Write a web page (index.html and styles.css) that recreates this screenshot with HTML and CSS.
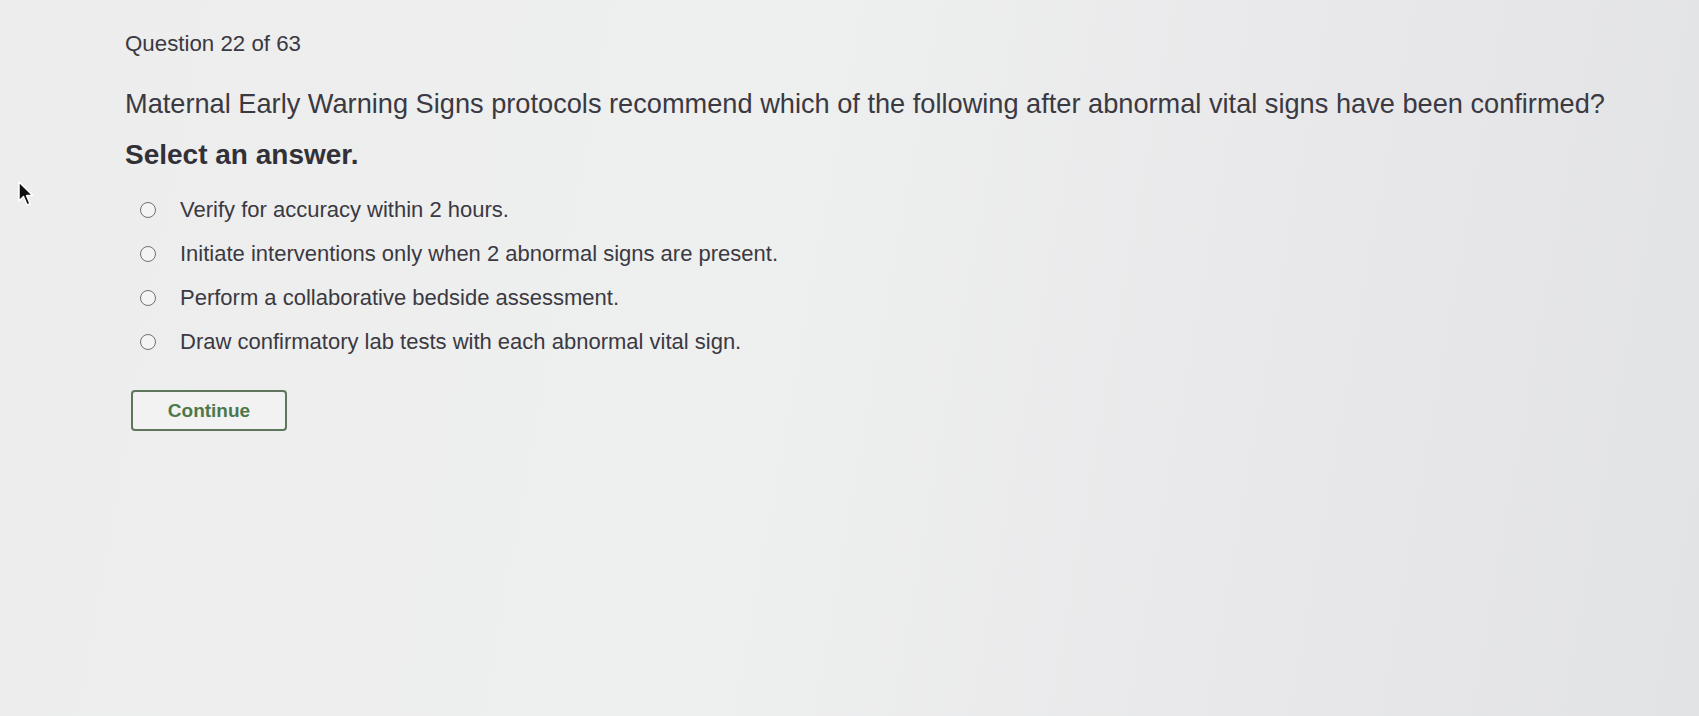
FILE: index.html
```
<!DOCTYPE html>
<html>
<head>
<meta charset="utf-8">
<link rel="stylesheet" href="styles.css">
</head>
<body>
<div class="page">
  <div class="counter">Question 22 of 63</div>
  <div class="question">Maternal Early Warning Signs protocols recommend which of the following after abnormal vital signs have been confirmed?</div>
  <div class="prompt">Select an answer.</div>
  <ul class="options">
    <li class="option"><span class="radio"></span><span class="label">Verify for accuracy within 2 hours.</span></li>
    <li class="option"><span class="radio"></span><span class="label">Initiate interventions only when 2 abnormal signs are present.</span></li>
    <li class="option"><span class="radio"></span><span class="label">Perform a collaborative bedside assessment.</span></li>
    <li class="option"><span class="radio"></span><span class="label">Draw confirmatory lab tests with each abnormal vital sign.</span></li>
  </ul>
  <button class="continue">Continue</button>
</div>
<svg class="cursor" width="18" height="26" viewBox="0 0 18 26">
  <path d="M2 1 L2 20 L6.5 15.5 L10 24 L13 22.8 L9.6 14.6 L16 14.6 Z" fill="#111" stroke="#fff" stroke-width="1.5" stroke-linejoin="round"/>
</svg>
</body>
</html>
```
FILE: styles.css
```
html, body {
  margin: 0;
  height: 100%;
}
body {
  background: linear-gradient(100deg, #ededed 0%, #eeefef 45%, #e8e8ea 75%, #e2e3e5 100%);
  font-family: "Liberation Sans", Arial, sans-serif;
  color: #3b3942;
  overflow: hidden;
  position: relative;
}
.page {
  padding: 30px 0 0 125px;
  display: flex;
  flex-direction: column;
  align-items: flex-start;
}
.counter {
  font-size: 22.3px;
  line-height: 28px;
}
.question {
  font-size: 27.2px;
  line-height: 32px;
  margin-top: 30px;
  white-space: nowrap;
}
.prompt {
  font-size: 28px;
  font-weight: bold;
  line-height: 32px;
  margin-top: 19px;
  color: #333138;
}
.options {
  list-style: none;
  margin: 26px 0 0 0;
  padding: 0 0 0 15px;
  display: flex;
  flex-direction: column;
  gap: 18px;
}
.option {
  display: flex;
  align-items: center;
  gap: 24px;
  height: 26px;
}
.radio {
  width: 14px;
  height: 14px;
  border: 1.8px solid #707075;
  border-radius: 50%;
  background: #f4f4f4;
  flex: none;
}
.label {
  font-size: 22px;
  line-height: 26px;
}
.continue {
  margin-top: 35px;
  margin-left: 6px;
  width: 156px;
  height: 41px;
  border: 2px solid #5d765c;
  border-radius: 4px;
  background: #f1f2f1;
  color: #4d784c;
  font-family: "Liberation Sans", Arial, sans-serif;
  font-weight: bold;
  font-size: 19px;
  padding: 0;
}
.cursor {
  position: absolute;
  left: 17px;
  top: 181px;
}
```
